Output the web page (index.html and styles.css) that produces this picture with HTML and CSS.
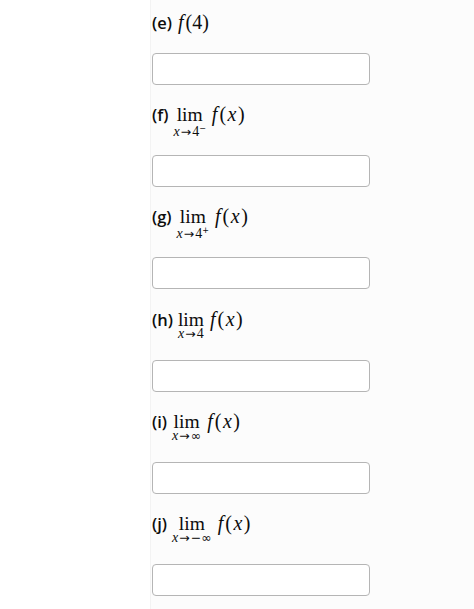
FILE: index.html
```html
<!DOCTYPE html>
<html>
<head>
<meta charset="utf-8">
<link rel="stylesheet" href="styles.css">
</head>
<body>
<div class="panel">
  <div class="item">
    <div class="label"><span class="tag">(e)</span><span class="math"><i class="fn">f</i>(4)</span></div>
    <input class="answer" type="text">
  </div>
  <div class="item">
    <div class="label tall"><span class="tag">(f)</span><span class="lim"><span class="op">lim</span><span class="sub"><i>x</i><span class="ar">→</span>4<span class="sup">−</span></span></span><span class="math"><i class="fn">f</i>(<i class="var">x</i>)</span></div>
    <input class="answer" type="text">
  </div>
  <div class="item">
    <div class="label tall"><span class="tag">(g)</span><span class="lim"><span class="op">lim</span><span class="sub"><i>x</i><span class="ar">→</span>4<span class="sup">+</span></span></span><span class="math"><i class="fn">f</i>(<i class="var">x</i>)</span></div>
    <input class="answer" type="text">
  </div>
  <div class="item">
    <div class="label tall"><span class="tag">(h)</span><span class="lim"><span class="op">lim</span><span class="sub"><i>x</i><span class="ar">→</span>4</span></span><span class="math"><i class="fn">f</i>(<i class="var">x</i>)</span></div>
    <input class="answer" type="text">
  </div>
  <div class="item">
    <div class="label tall"><span class="tag">(i)</span><span class="lim"><span class="op">lim</span><span class="sub"><i>x</i><span class="ar">→</span><span class="sym">∞</span></span></span><span class="math"><i class="fn">f</i>(<i class="var">x</i>)</span></div>
    <input class="answer" type="text">
  </div>
  <div class="item">
    <div class="label tall"><span class="tag">(j)</span><span class="lim"><span class="op">lim</span><span class="sub"><i>x</i><span class="ar">→</span><span class="sym">−∞</span></span></span><span class="math"><i class="fn">f</i>(<i class="var">x</i>)</span></div>
    <input class="answer" type="text">
  </div>
</div>
</body>
</html>
```
FILE: styles.css
```css
html, body {
  margin: 0;
  padding: 0;
  background: #ffffff;
}
.panel {
  margin-left: 150px;
  min-height: 609px;
  box-sizing: border-box;
  padding: 11px 0 0 1px;
  background: #fcfcfc;
  border-left: 1px solid #f3f3f3;
  display: flex;
  flex-direction: column;
}
.item {
  display: flex;
  flex-direction: column;
  align-items: flex-start;
}
.label {
  display: flex;
  align-items: baseline;
  color: #0d0d0d;
  height: 22px;
  margin-bottom: 20px;
}
.label.tall {
  height: 32px;
}
.tag {
  font-family: "Open Sans", "Liberation Sans", sans-serif;
  font-weight: 600;
  font-size: 16.5px;
  line-height: 22px;
  margin-right: 5px;
}
.math {
  font-family: "Liberation Serif", "Times New Roman", serif;
  font-size: 20px;
  line-height: 22px;
}
.math i, .sub i {
  font-style: italic;
}
.fn {
  padding: 0 2px 0 1px;
}
.var {
  padding: 0 1.5px;
}
.lim {
  display: inline-flex;
  flex-direction: column;
  align-items: center;
  font-family: "Liberation Serif", "Times New Roman", serif;
  margin-right: 5px;
}
.op {
  font-size: 19.5px;
  line-height: 17px;
}
.sub {
  font-size: 14px;
  line-height: 12px;
  white-space: nowrap;
}
.ar, .sym {
  font-family: "DejaVu Sans", sans-serif;
  font-size: 12.5px;
}
.ar {
  padding: 0 1px;
}
.sup {
  font-family: "DejaVu Sans", sans-serif;
  font-size: 8px;
  vertical-align: 5px;
}
.answer {
  box-sizing: border-box;
  width: 218px;
  height: 32px;
  margin: 0 0 18.2px 0;
  padding: 0 6px;
  border: 1px solid #b5b5b5;
  border-radius: 4px;
  background: #ffffff;
  font-size: 16px;
  outline: none;
}
```
